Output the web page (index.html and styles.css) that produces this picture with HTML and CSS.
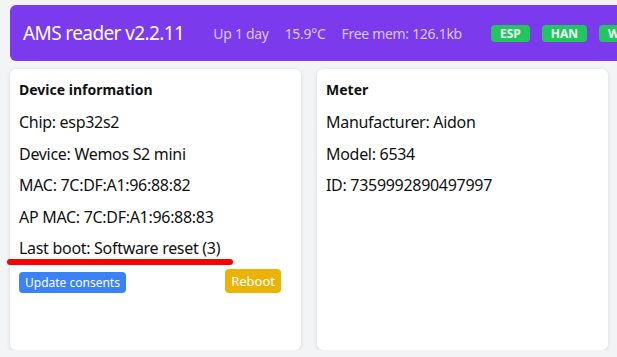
FILE: index.html
```html
<!DOCTYPE html>
<html lang="en">
<head>
    <meta charset="UTF-8">
    <meta name="viewport" content="width=device-width, initial-scale=1.0">
    <title>AMS reader</title>
    <link rel="stylesheet" href="styles.css">
</head>
<body>
    <nav class="header">
        <div class="title">AMS reader v2.2.11</div>
        <div class="stats">
            <span>Up 1 day</span>
            <span>15.9°C</span>
            <span>Free mem: 126.1kb</span>
        </div>
        <div class="badges">
            <span class="badge">ESP</span>
            <span class="badge">HAN</span>
            <span class="badge">WiFi</span>
        </div>
    </nav>

    <div class="grid">
        <div class="cnt">
            <div class="heading">Device information</div>
            <div class="row">Chip: esp32s2</div>
            <div class="row">Device: Wemos S2 mini</div>
            <div class="row">MAC: 7C:DF:A1:96:88:82</div>
            <div class="row">AP MAC: 7C:DF:A1:96:88:83</div>
            <div class="row">Last boot: Software reset (3)</div>
            <div class="actions">
                <button class="btn btn-blue">Update consents</button>
                <button class="btn btn-yellow">Reboot</button>
            </div>
            <div class="mark"></div>
        </div>
        <div class="cnt">
            <div class="heading">Meter</div>
            <div class="row">Manufacturer: Aidon</div>
            <div class="row">Model: 6534</div>
            <div class="row">ID: 7359992890497997</div>
        </div>
    </div>
</body>
</html>
```

FILE: styles.css
```css
html {
    overflow: hidden;
}
body {
    font-family: 'Noto Sans', sans-serif;
    background-color: #f3f4f6;
    color: #111;
    margin: 0;
    padding: 5px 0 0 10px;
    width: 700px;
}
.header {
    display: flex;
    align-items: center;
    background: #7c3aed;
    color: white;
    border-radius: 6px 0 0 6px;
    height: 56px;
    padding-left: 13px;
    white-space: nowrap;
}
.title {
    font-size: 19px;
    letter-spacing: -0.6px;
}
.stats {
    display: flex;
    gap: 16px;
    margin-left: 29px;
    font-size: 14px;
    color: #d6cbf6;
    letter-spacing: -0.3px;
}
.badges {
    display: flex;
    gap: 12px;
    margin-left: 29px;
}
.badge {
    background: #22c55e;
    color: #ecfdf5;
    font-size: 12px;
    font-weight: bold;
    border-radius: 4px;
    padding: 0 9px;
    line-height: 17px;
}
.grid {
    display: grid;
    grid-template-columns: 291px 291px;
    gap: 16px;
    margin-top: 8px;
}
.cnt {
    position: relative;
    background: white;
    border-radius: 6px;
    box-shadow: 0 1px 4px rgba(0, 0, 0, 0.12);
    padding: 11px 9px 0 9px;
    height: 270px;
    display: flex;
    flex-direction: column;
    gap: 7.5px;
}
.heading {
    font-size: 14px;
    font-weight: bold;
    line-height: 20px;
    margin-bottom: 2.5px;
}
.row {
    font-size: 16px;
    line-height: 24px;
    letter-spacing: -0.3px;
}
.actions {
    display: flex;
    justify-content: space-between;
    align-items: flex-end;
    padding-right: 11px;
    margin-top: 1.5px;
}
.btn {
    border: none;
    color: white;
    font-family: inherit;
    border-radius: 4px;
    cursor: pointer;
}
.btn-blue {
    background: #3b82f6;
    font-size: 12px;
    height: 21px;
    padding: 0 6px;
}
.btn-yellow {
    background: #eab308;
    font-size: 13px;
    height: 24px;
    padding: 0 6px;
}
.mark {
    position: absolute;
    left: -3px;
    top: 190px;
    width: 226px;
    height: 6px;
    background: #ff0000;
    border-radius: 3px;
}
```
